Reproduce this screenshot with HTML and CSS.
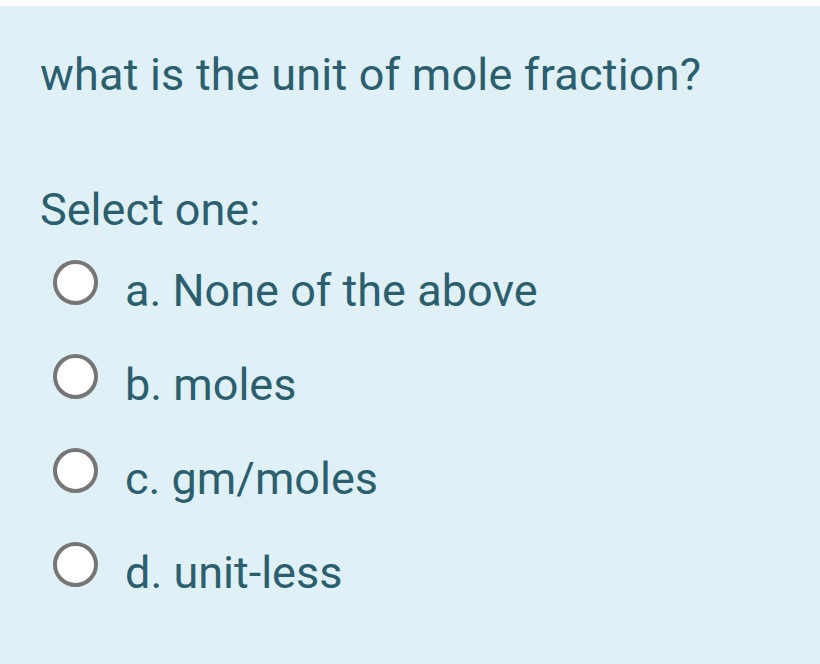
FILE: index.html
```html
<!DOCTYPE html>
<html>
<head>
<meta charset="utf-8">
<link rel="stylesheet" href="styles.css">
</head>
<body>
<div class="top"></div>
<main class="panel">
  <h1 class="question">what is the unit of mole fraction?</h1>
  <p class="prompt">Select one:</p>
  <ul class="answers">
    <li class="answer"><span class="radio"></span><span class="label">a. None of the above</span></li>
    <li class="answer"><span class="radio"></span><span class="label">b. moles</span></li>
    <li class="answer"><span class="radio"></span><span class="label">c. gm/moles</span></li>
    <li class="answer"><span class="radio"></span><span class="label">d. unit-less</span></li>
  </ul>
</main>
</body>
</html>
```
FILE: styles.css
```css
html, body {
  margin: 0;
  padding: 0;
  background: #ffffff;
}
body {
  width: 820px;
  height: 664px;
  overflow: hidden;
  font-family: Roboto, "Liberation Sans", sans-serif;
  color: #2c5f6e;
}
.top {
  height: 6px;
  background: #ffffff;
}
.panel {
  background: #dff0f6;
  height: 658px;
  padding: 42px 0 0 40px;
  box-sizing: border-box;
}
.question {
  margin: 0;
  font-weight: 400;
  font-size: 45px;
  line-height: 54px;
  letter-spacing: 0.2px;
}
.prompt {
  margin: 0;
  padding-top: 83px;
  font-size: 45px;
  line-height: 50px;
}
.answers {
  list-style: none;
  margin: 0;
  padding: 0 0 0 13px;
}
.answer {
  display: flex;
  align-items: center;
  gap: 27px;
  height: 94px;
}
.radio {
  width: 45px;
  height: 45px;
  box-sizing: border-box;
  border: 4px solid #767676;
  border-radius: 50%;
  background: #ffffff;
  flex: none;
}
.label {
  font-size: 45px;
  line-height: 54px;
  padding-top: 17px;
}
```
